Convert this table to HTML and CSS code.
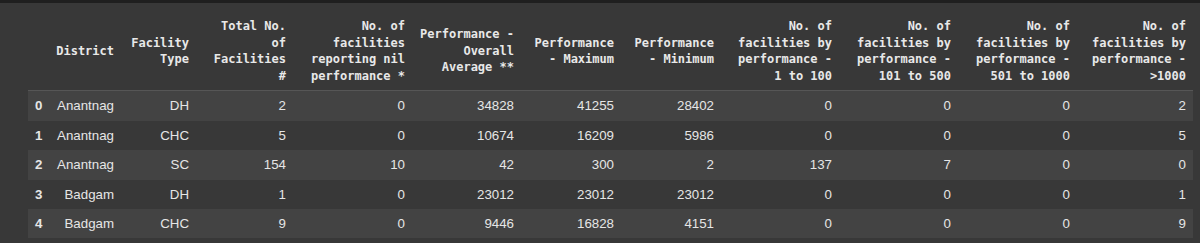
FILE: index.html
```html
<!DOCTYPE html>
<html lang="en">
<head>
<meta charset="utf-8">
<title>DataFrame</title>
<link rel="stylesheet" href="styles.css">
</head>
<body>
<div class="topbar"></div>
<div class="output">
<table class="dataframe">
<colgroup>
<col class="c-idx"><col class="c-dist"><col class="c-type"><col class="c-total"><col class="c-nil"><col class="c-avg"><col class="c-max"><col class="c-min"><col class="c-b1"><col class="c-b2"><col class="c-b3"><col class="c-b4">
</colgroup>
<thead>
<tr>
<th></th>
<th>District</th>
<th>Facility<br>Type</th>
<th>Total No.<br>of<br>Facilities<br>#</th>
<th>No. of<br>facilities<br>reporting nil<br>performance *</th>
<th>Performance -<br>Overall<br>Average **</th>
<th>Performance<br>- Maximum</th>
<th>Performance<br>- Minimum</th>
<th>No. of<br>facilities by<br>performance -<br>1 to 100</th>
<th>No. of<br>facilities by<br>performance -<br>101 to 500</th>
<th>No. of<br>facilities by<br>performance -<br>501 to 1000</th>
<th>No. of<br>facilities by<br>performance -<br>&gt;1000</th>
</tr>
</thead>
<tbody>
<tr><th>0</th><td>Anantnag</td><td>DH</td><td>2</td><td>0</td><td>34828</td><td>41255</td><td>28402</td><td>0</td><td>0</td><td>0</td><td>2</td></tr>
<tr><th>1</th><td>Anantnag</td><td>CHC</td><td>5</td><td>0</td><td>10674</td><td>16209</td><td>5986</td><td>0</td><td>0</td><td>0</td><td>5</td></tr>
<tr><th>2</th><td>Anantnag</td><td>SC</td><td>154</td><td>10</td><td>42</td><td>300</td><td>2</td><td>137</td><td>7</td><td>0</td><td>0</td></tr>
<tr><th>3</th><td>Badgam</td><td>DH</td><td>1</td><td>0</td><td>23012</td><td>23012</td><td>23012</td><td>0</td><td>0</td><td>0</td><td>1</td></tr>
<tr><th>4</th><td>Badgam</td><td>CHC</td><td>9</td><td>0</td><td>9446</td><td>16828</td><td>4151</td><td>0</td><td>0</td><td>0</td><td>9</td></tr>
</tbody>
</table>
</div>
</body>
</html>
```
FILE: styles.css
```css
html, body {
  margin: 0;
  padding: 0;
  background: #383838;
  height: 100%;
  overflow: hidden;
}

.topbar {
  height: 3px;
  background: #1f1f1f;
}

.output {
  padding: 9px 0 0 28px;
}

.dataframe {
  border-collapse: collapse;
  table-layout: fixed;
  width: 1165px;
  color: #e6e6e6;
}

.c-idx { width: 21px; }
.c-dist { width: 72px; }
.c-type { width: 75px; }
.c-total { width: 97px; }
.c-nil { width: 119px; }
.c-avg { width: 109px; }
.c-max { width: 100px; }
.c-min { width: 100px; }
.c-b1 { width: 118px; }
.c-b2 { width: 119px; }
.c-b3 { width: 119px; }
.c-b4 { width: 116px; }

.dataframe thead th {
  font-family: "DejaVu Sans Mono", "Liberation Mono", monospace;
  font-weight: bold;
  font-size: 12px;
  line-height: 16.6px;
  text-align: right;
  vertical-align: middle;
  white-space: nowrap;
  padding: 6px 7px;
  border-bottom: 1px solid #565656;
  color: #e8e8e8;
}

.dataframe tbody th,
.dataframe tbody td {
  font-family: "Liberation Sans", Arial, sans-serif;
  font-size: 13.3px;
  line-height: 15.4px;
  padding: 7px 7px;
  text-align: right;
  vertical-align: middle;
  white-space: nowrap;
}

.dataframe tbody th {
  font-weight: bold;
  text-align: left;
}

.dataframe tbody tr:nth-child(odd) {
  background: #434343;
}
```
